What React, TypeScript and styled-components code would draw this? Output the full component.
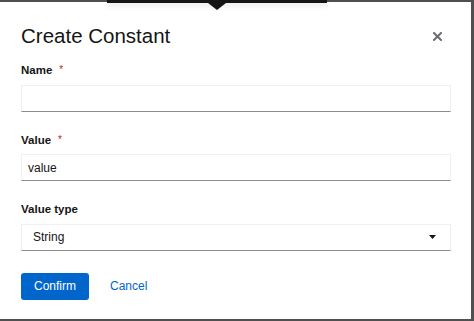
import styled, { createGlobalStyle } from 'styled-components';

const GlobalStyle = createGlobalStyle`
  html, body {
    margin: 0;
    padding: 0;
    background: #505050;
  }
  body {
    font-family: "Liberation Sans", Arial, sans-serif;
    color: #151515;
  }
`;

const Backdrop = styled.div`
  position: relative;
  width: 474px;
  height: 321px;
  box-sizing: border-box;
  padding: 2px 3px 2px 0;
  overflow: hidden;
`;

const Modal = styled.div`
  height: 100%;
  box-sizing: border-box;
  background: #fff;
  padding: 22px 20px 20px 21px;
  display: flex;
  flex-direction: column;
`;

const Pointer = styled.div`
  position: absolute;
  top: 0;
  left: 107px;
  width: 220px;
  height: 3px;
  background: #151515;
  box-shadow: 0 2px 6px rgba(0, 0, 0, 0.15);
  &::after {
    content: '';
    position: absolute;
    left: 101px;
    top: 3px;
    border-left: 9px solid transparent;
    border-right: 9px solid transparent;
    border-top: 7px solid #151515;
  }
`;

const Header = styled.div`
  display: flex;
  align-items: center;
  justify-content: space-between;
  height: 24px;
`;

const Title = styled.h1`
  margin: 0;
  font-size: 20.5px;
  line-height: 24px;
  font-weight: 400;
  color: #151515;
`;

const CloseButton = styled.button`
  border: 0;
  background: none;
  padding: 0;
  margin-right: 9px;
  width: 10px;
  height: 10px;
  display: flex;
  align-items: center;
  justify-content: center;
  cursor: pointer;
`;

const Form = styled.div`
  display: flex;
  flex-direction: column;
  gap: 20px;
  margin-top: 14px;
`;

const Group = styled.div`
  display: flex;
  flex-direction: column;
  gap: 6.5px;
`;

const Label = styled.label`
  font-size: 11.5px;
  line-height: 16px;
  font-weight: 700;
  color: #151515;
`;

const Required = styled.span`
  color: #c9190b;
  margin-left: 7px;
  font-size: 10px;
  font-weight: 400;
  vertical-align: 1px;
`;

const Input = styled.input`
  box-sizing: border-box;
  width: 100%;
  height: 27px;
  margin: 0;
  padding: 0 6px;
  font-family: "Liberation Sans", Arial, sans-serif;
  font-size: 12px;
  color: #151515;
  background: #fff;
  border: 1px solid #f0f0f0;
  border-bottom-color: #8a8d90;
  outline: none;
`;

const Select = styled.div`
  box-sizing: border-box;
  height: 27px;
  padding: 0 14px 0 11px;
  display: flex;
  align-items: center;
  justify-content: space-between;
  font-size: 12px;
  color: #151515;
  border: 1px solid #f0f0f0;
  border-bottom-color: #8a8d90;
`;

const Actions = styled.div`
  display: flex;
  gap: 8px;
  margin-top: 22px;
`;

const Button = styled.button<{ $variant: 'primary' | 'link' }>`
  height: 27px;
  padding: 0 13px;
  border: 0;
  border-radius: 3px;
  font-family: "Liberation Sans", Arial, sans-serif;
  font-size: 12px;
  cursor: pointer;
  background: ${(p) => (p.$variant === 'primary' ? '#0066cc' : 'transparent')};
  color: ${(p) => (p.$variant === 'primary' ? '#fff' : '#0066cc')};
`;

export default function App() {
  return (
    <>
      <GlobalStyle />
      <Backdrop>
        <Modal>
          <Header>
            <Title>Create Constant</Title>
            <CloseButton aria-label="Close">
              <svg width="9" height="9" viewBox="0 0 9 9">
                <path d="M1 1 L8 8 M8 1 L1 8" stroke="#6a6e73" strokeWidth="2" strokeLinecap="square" />
              </svg>
            </CloseButton>
          </Header>
          <Form>
            <Group>
              <Label>
                Name<Required>*</Required>
              </Label>
              <Input defaultValue="" />
            </Group>
            <Group>
              <Label>
                Value<Required>*</Required>
              </Label>
              <Input defaultValue="value" />
            </Group>
            <Group>
              <Label>Value type</Label>
              <Select>
                <span>String</span>
                <svg width="7" height="4" viewBox="0 0 7 4">
                  <path d="M0 0 H7 L3.5 4 Z" fill="#151515" />
                </svg>
              </Select>
            </Group>
          </Form>
          <Actions>
            <Button $variant="primary">Confirm</Button>
            <Button $variant="link">Cancel</Button>
          </Actions>
        </Modal>
        <Pointer />
      </Backdrop>
    </>
  );
}
